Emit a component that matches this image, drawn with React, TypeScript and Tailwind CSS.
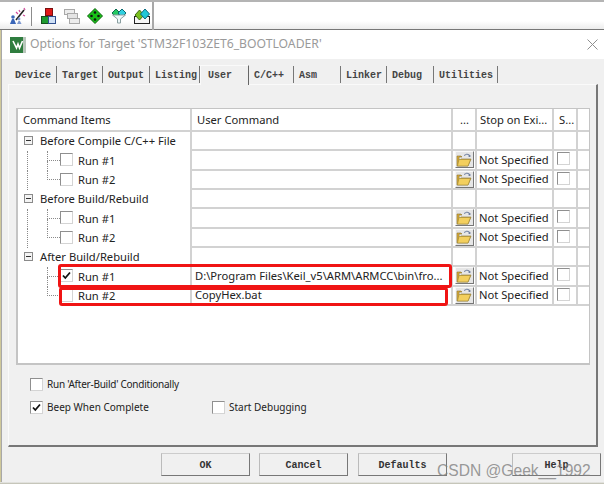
import type { ReactNode } from 'react';

const tabs = [
  { label: 'Device', w: 'w-[47px]' },
  { label: 'Target', w: 'w-[46px]' },
  { label: 'Output', w: 'w-[47px]' },
  { label: 'Listing', w: 'w-[50px]' },
  { label: 'User', w: 'w-[49px]', active: true },
  { label: 'C/C++', w: 'w-[45px]' },
  { label: 'Asm', w: 'w-[47px]' },
  { label: 'Linker', w: 'w-[46px]' },
  { label: 'Debug', w: 'w-[47px]' },
  { label: 'Utilities', w: 'w-[64px]' },
];

const rows = [
  { kind: 'group', label: 'Before Compile C/C++ File', more: true },
  { kind: 'run', label: 'Run #1', more: true },
  { kind: 'run', label: 'Run #2', more: true, last: true },
  { kind: 'group', label: 'Before Build/Rebuild', more: true },
  { kind: 'run', label: 'Run #1', more: true },
  { kind: 'run', label: 'Run #2', more: true, last: true },
  { kind: 'group', label: 'After Build/Rebuild' },
  { kind: 'run', label: 'Run #1', checked: true, cmd: 'D:\\Program Files\\Keil_v5\\ARM\\ARMCC\\bin\\fro...' },
  { kind: 'run', label: 'Run #2', last: true, cmd: 'CopyHex.bat' },
];

function CheckBox({ checked }: { checked?: boolean }) {
  return (
    <div className="w-[13px] h-[13px] shrink-0 bg-white border border-[#8f8f8f] border-r-[#d4d4d4] border-b-[#d4d4d4] flex items-center justify-center">
      {checked && (
        <svg width="9" height="9" viewBox="0 0 9 9">
          <path d="M1 4.5 L3.3 7 L8 1.5" fill="none" stroke="#111" strokeWidth="1.8" />
        </svg>
      )}
    </div>
  );
}

function FolderButton() {
  return (
    <div className="w-[19px] h-[17px] bg-[#e6e6e6] border border-[#f8f8f8] border-r-[#777] border-b-[#777] flex items-center justify-center">
      <svg width="16" height="14" viewBox="0 0 16 14">
        <path d="M1 3 L1 13 L12 13 L15 6 L5 6 L3 9 L3 4 L6 4 L5 3 Z" fill="#dcae38" stroke="#8a7430" strokeWidth="0.6" />
        <path d="M3 6.5 L14.5 6.5 L12 13 L1.5 13 Z" fill="#f3cf5e" stroke="#a08838" strokeWidth="0.6" />
        <path d="M8 2.5 Q11 0 13.5 2 L13.5 4 M12.2 3 L14.8 3" fill="none" stroke="#6f7f9f" strokeWidth="1" />
      </svg>
    </div>
  );
}

function Connector({ last }: { last?: boolean }) {
  return (
    <div className="w-[13px] h-full shrink-0 flex flex-col">
      <div className="h-1/2 border-l border-b border-dotted border-[#8a8a8a]" />
      {!last && <div className="h-1/2 border-l border-dotted border-[#8a8a8a]" />}
    </div>
  );
}

function Row({ row, index }: { row: (typeof rows)[number]; index: number }) {
  const inTrunk = index < 6;
  const isGroup = row.kind === 'group';
  return (
    <div className="flex h-[19.33px] border-b-2 border-[#d2d2d2]">
      <div className="w-[174px] h-[19.33px] shrink-0 flex items-center bg-white border-r-2 border-[#d2d2d2]">
        {isGroup ? (
          <>
            <div className="w-[9px] h-[9px] ml-[6px] mr-[7px] mb-[2px] shrink-0 bg-[#f4f4f4] border border-[#8a8a8a] flex items-center justify-center">
              <div className="w-[5px] h-px bg-[#333]" />
            </div>
            <span className="whitespace-nowrap">{row.label}</span>
          </>
        ) : (
          <>
            <div className={`w-[10px] h-full shrink-0 ${inTrunk ? 'border-r border-dotted border-[#8a8a8a]' : ''}`} />
            <div className="w-[19px] h-full shrink-0" />
            <Connector last={row.last} />
            <div className="pb-[2px]">
              <CheckBox checked={row.checked} />
            </div>
            <span className="ml-[5px] whitespace-nowrap">{row.label}</span>
          </>
        )}
      </div>
      <div className="w-[261px] shrink-0 pl-[3px] flex items-center bg-white border-r-2 border-[#d2d2d2] whitespace-nowrap">
        {row.cmd}
      </div>
      <div className="w-[24px] shrink-0 flex items-center justify-center bg-white border-r-2 border-[#d2d2d2]">
        {!isGroup && <FolderButton />}
      </div>
      <div className="w-[77px] shrink-0 pl-[2px] flex items-center bg-white border-r-2 border-[#d2d2d2] whitespace-nowrap">
        {!isGroup && 'Not Specified'}
      </div>
      <div className="w-[24px] shrink-0 pl-[3px] pb-[2px] flex items-center bg-white border-r-2 border-[#d2d2d2]">
        {!isGroup && <CheckBox />}
      </div>
    </div>
  );
}

function HeaderCell({ className, children }: { className: string; children: ReactNode }) {
  return (
    <div className={`${className} shrink-0 pt-[1px] flex items-center border-r-2 border-[#d2d2d2] whitespace-nowrap`}>{children}</div>
  );
}

function DialogButton({ label, className = '' }: { label: string; className?: string }) {
  return (
    <div className={`w-[89px] h-[23px] pt-[1px] flex items-center justify-center bg-[#f0f0f0] border border-[#fafafa] border-r-[#777] border-b-[#777] border-l-[#bbb] border-t-[#ccc] font-['Liberation_Mono',monospace] text-[10px] font-bold text-[#333] ${className}`}>
      {label}
    </div>
  );
}

function ToolbarIcons() {
  return (
    <div className="h-[28px] w-[154px] shrink-0 flex items-center border-r-2 border-[#a8a8a8]">
      <svg className="ml-[9px]" width="18" height="18" viewBox="0 0 18 18">
        <path d="M7 13 L15 3" stroke="#222" strokeWidth="1.6" />
        <path d="M10 3 L11 5 M14 8 L16 9 M15 1 L16 3 M9 7 L7 5" stroke="#d04a9a" strokeWidth="1.2" />
        <circle cx="4" cy="10" r="1.8" fill="#3a66b8" />
        <path d="M1 17 L3 12 L5 12 L7 17 Z" fill="#3a66b8" />
        <circle cx="10" cy="12" r="1.4" fill="#7d98cf" />
        <path d="M8 17 L9.5 14 L11 14 L12.5 17 Z" fill="#7d98cf" />
      </svg>
      <div className="ml-[4px] w-px h-[19px] bg-[#8c8c8c]" />
      <svg className="ml-[9px]" width="16" height="16" viewBox="0 0 16 16">
        <rect x="4.5" y="0.5" width="7" height="7" fill="#e01818" stroke="#7a1010" />
        <rect x="0.5" y="8.5" width="7" height="7" fill="#1e9a30" stroke="#14501c" />
        <rect x="7.5" y="8.5" width="7" height="7" fill="#cfe0f5" stroke="#2f4f8f" />
      </svg>
      <svg className="ml-[7px]" width="16" height="16" viewBox="0 0 16 16">
        <rect x="0.5" y="1.5" width="10" height="5" fill="#ececec" stroke="#a8a8a8" />
        <rect x="3.5" y="5.5" width="10" height="5" fill="#e4e4e4" stroke="#a8a8a8" />
        <rect x="5.5" y="10.5" width="10" height="5" fill="#ececec" stroke="#a8a8a8" />
      </svg>
      <svg className="ml-[7px]" width="16" height="16" viewBox="0 0 16 16">
        <path d="M8 0.5 L15.5 8 L8 15.5 L0.5 8 Z" fill="#18c018" stroke="#0a600a" />
        <circle cx="8" cy="4.5" r="1.3" fill="#111" />
        <circle cx="4.5" cy="8" r="1.3" fill="#111" />
        <circle cx="11.5" cy="8" r="1.3" fill="#111" />
        <circle cx="8" cy="11.5" r="1.3" fill="#111" />
      </svg>
      <svg className="ml-[8px]" width="16" height="16" viewBox="0 0 16 16">
        <path d="M5 1 L9 5 L5 9 L1 5 Z" fill="#22c860" stroke="#0a6a50" />
        <path d="M11 1 L15 5 L11 9 L7 5 Z" fill="#30d0e0" stroke="#0a6a70" />
        <path d="M1.5 7 L14.5 7 L9.5 11 L9.5 15 L6.5 15 L6.5 11 Z" fill="#eef8fa" stroke="#8a9fa0" />
      </svg>
      <svg className="ml-[7px]" width="16" height="16" viewBox="0 0 16 16">
        <rect x="0.5" y="8.5" width="15" height="7" fill="#f6f6f6" stroke="#222" />
        <path d="M5.5 2 L10 7 L5.5 12 L1 7 Z" fill="#7bbf1e" stroke="#3d6a10" />
        <path d="M11 1 L15.5 6 L11 11 L6.5 6 Z" fill="#22c8d8" stroke="#0a6a80" />
      </svg>
    </div>
  );
}

export default function App() {
  return (
    <div className="relative w-[604px] h-[484px] overflow-hidden bg-white font-['Noto_Sans',sans-serif] text-[11.2px] text-[#222]">
      {/* toolbar strip */}
      <div className="h-[30px] bg-gradient-to-b from-white from-70% to-[#ececec] border-t-2 border-[#b4b4b4] border-b border-b-[#777] flex">
        <ToolbarIcons />
      </div>

      <div className="flex h-[452px]">
        <div className="w-[2px] bg-[#cfc89a] border-r border-[#a8a8a8]" />
        {/* dialog */}
        <div className="w-[602px] h-[452px] flex flex-col bg-[#f0f0f0]">
          <div className="h-[29px] shrink-0 bg-white flex items-center pl-[8px] pr-[6px]">
            <svg width="16" height="16" viewBox="0 0 16 16">
              <rect width="16" height="16" fill="#2f7d3f" />
              <rect x="13" width="3" height="16" fill="#b9c7bc" />
              <path d="M3 4 L6.5 11 L8 7 L9.5 11 L12.5 4" fill="none" stroke="#fff" strokeWidth="1.6" />
            </svg>
            <span className="ml-[4px] text-[12.2px] text-[#9a9a9a] whitespace-nowrap">
              Options for Target 'STM32F103ZET6_BOOTLOADER'
            </span>
            <svg className="ml-auto" width="11" height="11" viewBox="0 0 11 11">
              <path d="M0.5 0.5 L10.5 10.5 M10.5 0.5 L0.5 10.5" stroke="#8f8f8f" strokeWidth="1" />
            </svg>
          </div>

          {/* tabs */}
          <div className="h-[25px] shrink-0 flex items-end pl-[8px] font-['Liberation_Mono',monospace] text-[10px] font-bold text-[#444]">
            {tabs.map((tab) =>
              tab.active ? (
                <div
                  key={tab.label}
                  className={`${tab.w} h-[20px] pl-[7px] pt-[2px] bg-[#f0f0f0] border-l border-t border-[#fafafa] border-r border-r-[#666] relative z-10 -mb-px`}
                >
                  {tab.label}
                </div>
              ) : (
                <div key={tab.label} className={`${tab.w} h-[17px] mb-[1px] pl-[5px] pt-[2px] flex items-center border-r border-[#777]`}>
                  {tab.label}
                </div>
              ),
            )}
          </div>

          {/* tab panel */}
          <div className="ml-[6px] w-[590px] h-[363px] shrink-0 pl-[7px] pt-[23px] border border-[#fafafa] border-r-2 border-b-2 border-r-[#777] border-b-[#777]">
            <div className="w-[574px] h-[257px] bg-white border-l-2 border-t border-r border-b-2 border-[#c4c4c4]">
              <div className="h-[23px] flex bg-white border-b-2 border-[#d2d2d2]">
                <HeaderCell className="w-[174px] pl-[5px]">Command Items</HeaderCell>
                <HeaderCell className="w-[261px] pl-[5px]">User Command</HeaderCell>
                <HeaderCell className="w-[24px] pl-[7px]">...</HeaderCell>
                <HeaderCell className="w-[77px] pl-[3px]">Stop on Exi...</HeaderCell>
                <HeaderCell className="w-[24px] pl-[5px]">S...</HeaderCell>
              </div>
              {rows.map((row, i) => (
                <Row key={i} row={row} index={i} />
              ))}
            </div>

            <div className="mt-[12px] ml-[14px] flex items-center">
              <CheckBox />
              <span className="ml-[4px] text-[10px] tracking-[-0.25px]">Run 'After-Build' Conditionally</span>
            </div>
            <div className="mt-[8px] ml-[14px] flex items-center">
              <CheckBox checked />
              <span className="ml-[4px] w-[165px] text-[10px]">Beep When Complete</span>
              <CheckBox />
              <span className="ml-[4px] text-[10px]">Start Debugging</span>
            </div>
          </div>

          {/* buttons */}
          <div className="mt-[6px] pl-[159px] flex">
            <DialogButton label="OK" />
            <DialogButton label="Cancel" className="ml-[9px]" />
            <DialogButton label="Defaults" className="ml-[10px]" />
            <DialogButton label="Help" className="ml-[65px]" />
          </div>
        </div>
      </div>
      <div className="h-[2px] bg-gradient-to-b from-[#f0f0f0] to-[#b8b8a8]" />

      {/* red markup drawn over the screenshot */}
      <div className="absolute left-[58px] top-[264px] w-[394px] h-[24px] border-[3px] border-[#f01414] rounded-[3px]" />
      <div className="absolute left-[59px] top-[287px] w-[389px] h-[19px] border-[3px] border-[#f01414] rounded-[3px]" />
      <div className="absolute left-[437px] top-[459px] font-['Liberation_Sans',sans-serif] text-[15.6px] text-[#808080]/80 whitespace-nowrap">
        CSDN @Geek__1992
      </div>
    </div>
  );
}
